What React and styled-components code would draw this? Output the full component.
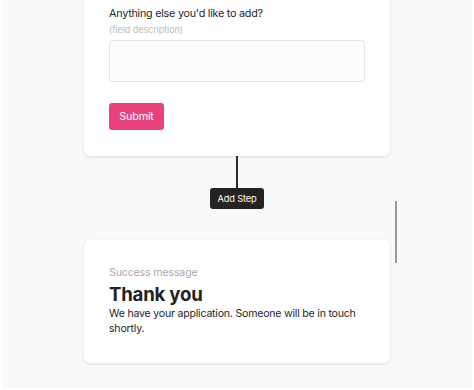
import React from 'react';
import styled, { createGlobalStyle } from 'styled-components';

const Global = createGlobalStyle`
  html, body { margin:0; padding:0; background:#fff; }
  body { font-family: Inter, "Noto Sans", "Liberation Sans", sans-serif; }
`;

const Page = styled.div`
  position:relative;
  margin:0 2px;
  height:388px;
  background:#f9f9f9;
  overflow:hidden;
  display:flex;
  flex-direction:column;
  align-items:center;
`;

const Card = styled.div`
  width:306px;
  box-sizing:border-box;
  background:#fff;
  border-radius:6px;
  box-shadow:0 1px 3px rgba(0,0,0,0.12);
  padding:${p => p.pad};
  margin-top:${p => p.top || 0}px;
`;

const Label = styled.div`
  font-size:10.8px;
  letter-spacing:-0.25px;
  color:#262626;
  line-height:14px;
`;

const Desc = styled.div`
  font-size:9.2px;
  letter-spacing:-0.15px;
  color:#bdbdbd;
  line-height:12px;
  margin-top:3px;
`;

const TextArea = styled.div`
  box-sizing:border-box;
  margin-top:4px;
  height:42px;
  border:1px solid #e6e6e6;
  border-radius:3px;
  background:#fcfcfc;
`;

const Button = styled.button`
  display:block;
  margin-top:21px;
  width:55px;
  height:27px;
  border:0;
  border-radius:3px;
  background:#e8417e;
  color:#fff;
  font-family:inherit;
  font-size:10.8px;
  letter-spacing:-0.2px;
  padding:0;
`;

const Connector = styled.div`
  width:2px;
  height:32px;
  background:#2a2a2a;
`;

const StepBadge = styled.div`
  background:#232323;
  color:#fff;
  font-size:9.3px;
  letter-spacing:-0.15px;
  border-radius:3px;
  width:54px;
  height:21px;
  display:flex;
  align-items:center;
  justify-content:center;
`;

const Small = styled.div`
  font-size:10.6px;
  letter-spacing:-0.15px;
  color:#a9a9a9;
  line-height:13px;
`;

const Title = styled.div`
  font-size:18.6px;
  letter-spacing:-0.2px;
  font-weight:700;
  color:#222;
  line-height:22px;
  margin-top:4px;
`;

const Body = styled.div`
  font-size:10.6px;
  letter-spacing:-0.22px;
  color:#262626;
  line-height:15px;
  margin-top:1px;
`;

const Scroll = styled.div`
  position:absolute;
  left:393px;
  top:201px;
  width:2px;
  height:62px;
  background:#9a9a9a;
`;

export default function App() {
  return (
    <>
      <Global />
      <Page>
        <Card pad="17px 25px 26px" top={-10}>
          <Label>Anything else you'd like to add?</Label>
          <Desc>(field description)</Desc>
          <TextArea />
          <Button>Submit</Button>
        </Card>
        <Connector />
        <StepBadge>Add Step</StepBadge>
        <Card pad="26px 25px 27px" top={31}>
          <Small>Success message</Small>
          <Title>Thank you</Title>
          <Body>We have your application. Someone will be in touch shortly.</Body>
        </Card>
        <Scroll />
      </Page>
    </>
  );
}
